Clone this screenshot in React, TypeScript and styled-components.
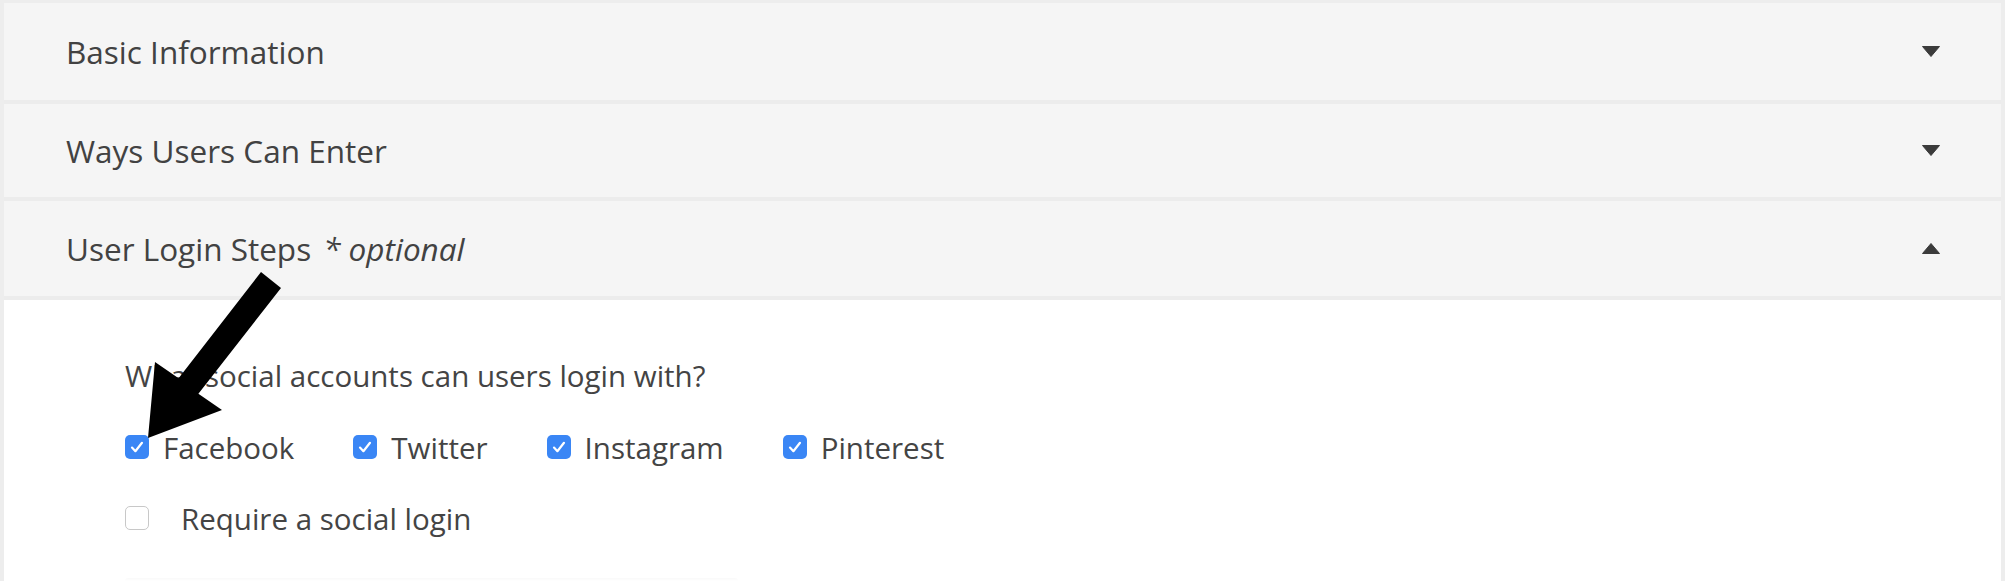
import React from "react";
import styled, { createGlobalStyle } from "styled-components";

const Global = createGlobalStyle`
  html, body { margin: 0; padding: 0; background: #ffffff; }
  body { font-family: "Open Sans", "Noto Sans", sans-serif; color: #444444; overflow: hidden; }
  * { box-sizing: border-box; }
`;

const Page = styled.div`
  position: relative;
  width: 2005px;
  height: 581px;
  overflow: hidden;
`;

const Accordion = styled.div`
  width: 2005px;
  height: 581px;
  border-top: 3px solid #ededed;
  border-left: 4px solid #ededed;
  border-right: 4px solid #ededed;
  display: flex;
  flex-direction: column;
`;

const Header = styled.div<{ $h: number }>`
  height: ${(p) => p.$h}px;
  flex: none;
  background: #f5f5f5;
  border-bottom: 4px solid #ececec;
  display: flex;
  align-items: center;
  justify-content: space-between;
  padding: 0 61px 0 62px;
`;

const Title = styled.div`
  font-size: 31.5px;
  color: #424242;
  display: flex;
  align-items: baseline;
`;

const Optional = styled.span`
  font-style: italic;
  margin-left: 12px;
`;

const Caret = styled.svg`
  width: 18px;
  height: 11px;
  display: block;
`;

const Body = styled.div`
  flex: 1;
  min-height: 0;
  background: #ffffff;
  padding: 56px 0 0 121px;
  display: flex;
  flex-direction: column;
`;

const Question = styled.div`
  font-size: 29.5px;
  line-height: 40px;
  color: #444444;
`;

const OptionRow = styled.div<{ $mt: number }>`
  display: flex;
  align-items: center;
  margin-top: ${(p) => p.$mt}px;
  height: 40px;
  flex: none;
`;

const Option = styled.label<{ $gap: number }>`
  display: flex;
  align-items: center;
  gap: ${(p) => p.$gap}px;
  margin-right: 59px;
  font-size: 29.5px;
  color: #444444;
`;

const Box = styled.span<{ $checked: boolean }>`
  width: 24px;
  height: 24px;
  border-radius: 5px;
  flex: none;
  display: flex;
  align-items: center;
  justify-content: center;
  background: ${(p) => (p.$checked ? "#3a86f5" : "#ffffff")};
  border: ${(p) => (p.$checked ? "none" : "1.5px solid #c8c8c8")};
`;

const Faint = styled.div`
  margin-top: 40px;
  width: 613px;
  flex: 1;
  border-radius: 8px 8px 0 0;
  background: linear-gradient(to bottom, #f9f9f9, #ffffff);
`;

const ArrowSvg = styled.svg`
  position: absolute;
  left: 0;
  top: 0;
  width: 400px;
  height: 500px;
  pointer-events: none;
`;

const Down = () => (
  <Caret viewBox="0 0 18 11">
    <path d="M0.5 0.5 H17.5 L9 10.5 Z" fill="#3b3b3b" strokeLinejoin="round" stroke="#3b3b3b" strokeWidth="1" />
  </Caret>
);
const Up = () => (
  <Caret viewBox="0 0 18 11">
    <path d="M0.5 10.5 H17.5 L9 0.5 Z" fill="#3b3b3b" strokeLinejoin="round" stroke="#3b3b3b" strokeWidth="1" />
  </Caret>
);

const Check = ({ checked }: { checked: boolean }) => (
  <Box $checked={checked}>
    {checked && (
      <svg width="18" height="18" viewBox="0 0 18 18">
        <path d="M4 9.6 L7.4 13.2 L14 4.8" fill="none" stroke="#ffffff" strokeWidth="2.2" strokeLinecap="round" strokeLinejoin="round" />
      </svg>
    )}
  </Box>
);

const socials = ["Facebook", "Twitter", "Instagram", "Pinterest"];

export default function App() {
  return (
    <Page>
      <Global />
      <Accordion>
        <Header $h={101}>
          <Title>Basic Information</Title>
          <Down />
        </Header>
        <Header $h={97}>
          <Title>Ways Users Can Enter</Title>
          <Down />
        </Header>
        <Header $h={99}>
          <Title>
            User Login Steps<Optional>* optional</Optional>
          </Title>
          <Up />
        </Header>
        <Body>
          <Question>What social accounts can users login with?</Question>
          <OptionRow $mt={31}>
            {socials.map((s) => (
              <Option key={s} $gap={14}>
                <Check checked />
                {s}
              </Option>
            ))}
          </OptionRow>
          <OptionRow $mt={31}>
            <Option $gap={32}>
              <Check checked={false} />
              Require a social login
            </Option>
          </OptionRow>
          <Faint />
        </Body>
      </Accordion>
      <ArrowSvg viewBox="0 0 400 500">
        <polygon
          points="281,288 198.4,393.7 222,410 148,438 155,362 178.6,378.3 261,272"
          fill="#000000"
        />
      </ArrowSvg>
    </Page>
  );
}
